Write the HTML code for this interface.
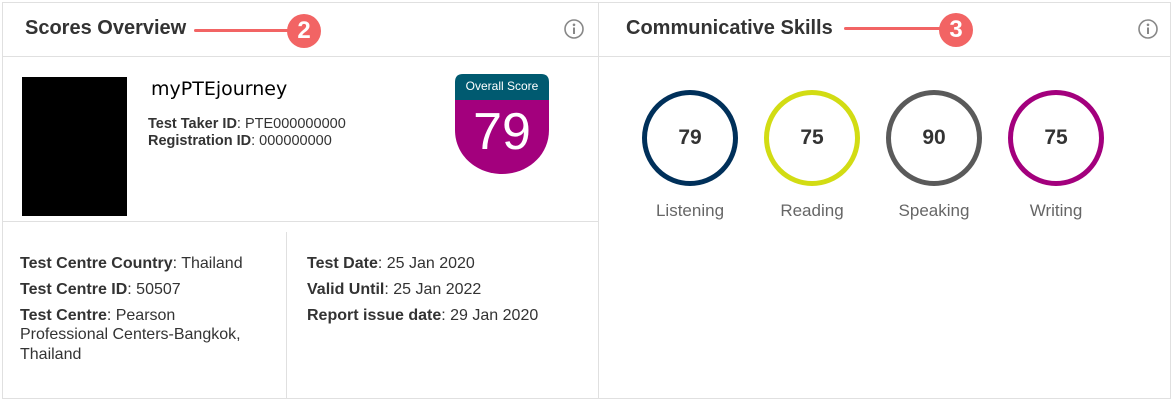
<!DOCTYPE html>
<html><head><meta charset="utf-8"><style>
*{margin:0;padding:0;box-sizing:border-box}
body{width:1174px;height:400px;background:#fff;font-family:"Liberation Sans",Arial,Helvetica,sans-serif;color:#333;position:relative;overflow:hidden}
.a{position:absolute}
.hl{position:absolute;height:1px;background:#e0e0e0}
.vl{position:absolute;width:1px;background:#e0e0e0}
.t{font-size:20px;font-weight:bold;color:#333;white-space:nowrap}
.f{font-size:16px;color:#333;white-space:nowrap}
b{font-weight:bold}
.c{position:absolute;width:96px;height:96px;border-radius:50%;border:5px solid;text-align:center;line-height:86px;font-size:21px;font-weight:bold;color:#333}
.l{position:absolute;width:120px;text-align:center;font-size:17px;color:#666}
</style></head><body>
<div class="hl" style="left:2px;top:2px;width:1169px"></div>
<div class="hl" style="left:2px;top:398px;width:1169px"></div>
<div class="vl" style="left:2px;top:2px;height:397px"></div>
<div class="vl" style="left:1170px;top:2px;height:397px"></div>
<div class="vl" style="left:598px;top:2px;height:397px"></div>
<div class="hl" style="left:2px;top:56px;width:1169px"></div>
<div class="hl" style="left:2px;top:221px;width:596px"></div>
<div class="vl" style="left:286px;top:232px;height:167px"></div>

<div class="a t" style="left:25px;top:17px">Scores Overview</div>
<div class="a" style="left:194px;top:29px;width:100px;height:3px;background:#f26464;border-radius:2px"></div>
<div class="a" style="left:287px;top:14px;width:34px;height:34px;border-radius:50%;background:#f26464;color:#fff;font-weight:bold;font-size:24px;text-align:center;line-height:34px">2</div>
<div class="a t" style="left:626px;top:17px">Communicative Skills</div>
<div class="a" style="left:844px;top:27px;width:100px;height:3px;background:#f26464;border-radius:2px"></div>
<div class="a" style="left:939px;top:13px;width:34px;height:34px;border-radius:50%;background:#f26464;color:#fff;font-weight:bold;font-size:24px;text-align:center;line-height:34px">3</div>
<svg class="a" style="left:563px;top:18px" width="22" height="22" viewBox="0 0 22 22"><circle cx="11" cy="11" r="9" fill="none" stroke="#888" stroke-width="1.6"/><circle cx="11" cy="6.8" r="1.3" fill="#888"/><rect x="10" y="9.5" width="2" height="6.5" fill="#888"/></svg>
<svg class="a" style="left:1137px;top:18px" width="22" height="22" viewBox="0 0 22 22"><circle cx="11" cy="11" r="9" fill="none" stroke="#888" stroke-width="1.6"/><circle cx="11" cy="6.8" r="1.3" fill="#888"/><rect x="10" y="9.5" width="2" height="6.5" fill="#888"/></svg>

<div class="a" style="left:22px;top:77px;width:105px;height:139px;background:#000"></div>
<div class="a" style="left:151px;top:78px;font-family:'Comic Sans MS','DejaVu Sans',cursive;font-size:19px;color:#000">myPTEjourney</div>
<div class="a f" style="left:148px;top:116px;line-height:17px;font-size:14.5px"><b>Test Taker ID</b>: PTE000000000<br><b>Registration ID</b>: 000000000</div>

<svg class="a" style="left:455px;top:74px" width="94" height="101" viewBox="0 0 94 101"><path d="M0 26 H94 V56 C94 82 72 100 47 100 C22 100 0 82 0 56 Z" fill="#a3007d"/><path d="M8 0 H86 Q94 0 94 8 V26 H0 V8 Q0 0 8 0 Z" fill="#005a70"/><text x="47" y="16" text-anchor="middle" font-family="Liberation Sans, Arial" font-size="12" fill="#fff">Overall Score</text><text x="47" y="75" text-anchor="middle" font-family="Liberation Sans, Arial" font-size="52" fill="#fff">79</text></svg>

<div class="a f" style="left:20px;top:251px;line-height:26px"><b>Test Centre Country</b>: Thailand<br><b>Test Centre ID</b>: 50507<br><b>Test Centre</b>: Pearson</div>
<div class="a f" style="left:20px;top:325px;line-height:20px">Professional Centers-Bangkok,<br>Thailand</div>
<div class="a f" style="left:307px;top:251px;line-height:26px"><b>Test Date</b>: 25 Jan 2020<br><b>Valid Until</b>: 25 Jan 2022<br><b>Report issue date</b>: 29 Jan 2020</div>

<div class="c" style="left:642px;top:90px;border-color:#00305a">79</div>
<div class="c" style="left:764px;top:90px;border-color:#d2dc13">75</div>
<div class="c" style="left:886px;top:90px;border-color:#5a5a5a">90</div>
<div class="c" style="left:1008px;top:90px;border-color:#a3007d">75</div>
<div class="l" style="left:630px;top:201px">Listening</div>
<div class="l" style="left:752px;top:201px">Reading</div>
<div class="l" style="left:874px;top:201px">Speaking</div>
<div class="l" style="left:996px;top:201px">Writing</div>
</body></html>
